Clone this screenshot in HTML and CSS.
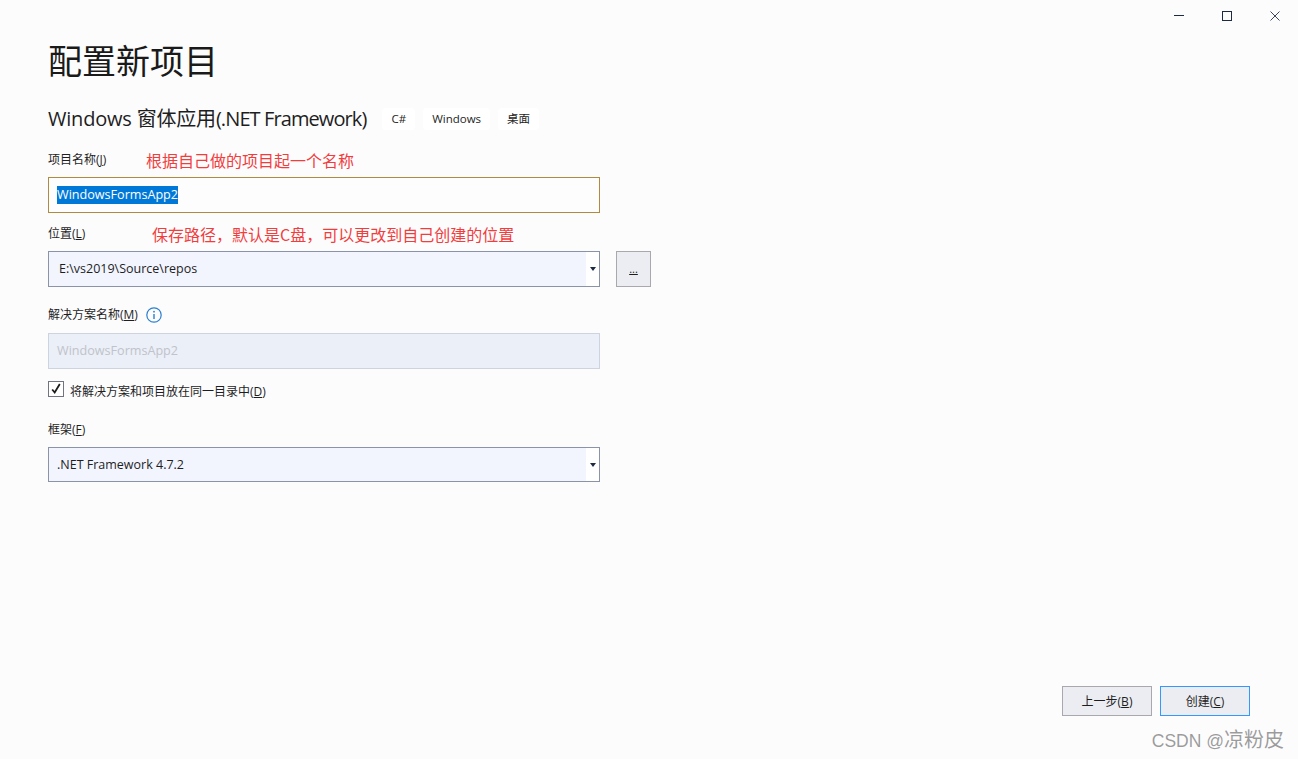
FILE: index.html
```html
<!DOCTYPE html>
<html lang="zh-CN">
<head>
<meta charset="utf-8">
<title>配置新项目</title>
<link rel="stylesheet" href="styles.css">
</head>
<body>
<div class="window">
  <header class="titlebar">
    <button class="winbtn" aria-label="最小化"><svg width="12" height="12" viewBox="0 0 12 12"><path d="M1 5.5h10" stroke="#1e2a44" stroke-width="1"/></svg></button>
    <button class="winbtn" aria-label="最大化"><svg width="12" height="12" viewBox="0 0 12 12"><rect x="1.5" y="1.5" width="9" height="9" fill="none" stroke="#1e2a44" stroke-width="1"/></svg></button>
    <button class="winbtn" aria-label="关闭"><svg width="12" height="12" viewBox="0 0 12 12"><path d="M1.5 1.5l9 9M10.5 1.5l-9 9" stroke="#3c465e" stroke-width="1"/></svg></button>
  </header>
  <main class="content">
    <h1 class="title">配置新项目</h1>
    <div class="subtitle-row">
      <h2 class="subtitle">Windows 窗体应用<span class="tight">(.NET Framework)</span></h2>
      <div class="chips">
        <span class="chip">C#</span>
        <span class="chip">Windows</span>
        <span class="chip">桌面</span>
      </div>
    </div>

    <div class="label-row label-first">
      <label class="label label-w1">项目名称(<u>J</u>)</label>
      <span class="note">根据自己做的项目起一个名称</span>
    </div>
    <div class="field field-active"><span class="selected">WindowsFormsApp2</span></div>

    <div class="label-row label-second">
      <label class="label label-w2">位置(<u>L</u>)</label>
      <span class="note">保存路径，默认是C盘，可以更改到自己创建的位置</span>
    </div>
    <div class="combo-line">
      <div class="field combo">
        <span class="combo-text combo-text-path">E:\vs2019\Source\repos</span>
        <span class="combo-arrow"><svg width="6" height="4" viewBox="0 0 6 4"><path d="M0 0h6L3 4z" fill="#1e2a44"/></svg></span>
      </div>
      <button class="browse"><u>...</u></button>
    </div>

    <div class="label-row label-third">
      <label class="label">解决方案名称(<u>M</u>)</label>
      <svg class="info" width="16" height="16" viewBox="0 0 16 16"><circle cx="8" cy="8" r="7.2" fill="none" stroke="#2a7fd0" stroke-width="1.2"/><path d="M8 7v5" stroke="#2a7fd0" stroke-width="1.4"/><circle cx="8" cy="4.7" r="0.9" fill="#2a7fd0"/></svg>
    </div>
    <div class="field field-disabled">WindowsFormsApp2</div>

    <div class="check-row">
      <span class="checkbox"><svg width="12" height="12" viewBox="0 0 12 12"><path d="M2.2 6.5l2.5 3L9.8 1" fill="none" stroke="#1b1b1b" stroke-width="1.8"/></svg></span>
      <span class="label check-label">将解决方案和项目放在同一目录中(<u>D</u>)</span>
    </div>

    <div class="label-row label-fourth">
      <label class="label">框架(<u>F</u>)</label>
    </div>
    <div class="field combo combo-short">
      <span class="combo-text">.NET Framework 4.7.2</span>
      <span class="combo-arrow"><svg width="6" height="4" viewBox="0 0 6 4"><path d="M0 0h6L3 4z" fill="#1e2a44"/></svg></span>
    </div>
  </main>
  <footer class="footer">
    <button class="btn">上一步(<u>B</u>)</button>
    <button class="btn btn-default">创建(<u>C</u>)</button>
  </footer>
  <div class="watermark"><span class="watermark-latin">CSDN @</span>凉粉皮</div>
</div>
</body>
</html>
```
FILE: styles.css
```css
* { box-sizing: border-box; }
html, body { margin: 0; padding: 0; }
body {
  width: 1298px;
  height: 759px;
  overflow: hidden;
  background: #fcfcfd;
  color: #1e1e1e;
  font-family: "Open Sans", "Noto Sans CJK SC", sans-serif;
  font-size: 12px;
}
button { font-family: inherit; padding: 0; }
u { text-underline-offset: 1px; }
.window {
  position: relative;
  width: 1298px;
  height: 759px;
  display: flex;
  flex-direction: column;
}
.titlebar {
  display: flex;
  justify-content: flex-end;
  height: 32px;
}
.winbtn {
  width: 48px;
  height: 32px;
  padding-left: 2px;
  border: 0;
  background: transparent;
  display: flex;
  align-items: center;
  justify-content: center;
}
.content {
  flex: 1;
  display: flex;
  flex-direction: column;
  align-items: flex-start;
  padding-left: 48px;
}
.title {
  margin: 6px 0 0;
  height: 44px;
  line-height: 44px;
  font-size: 34px;
  font-weight: 400;
  color: #1a1a1a;
  font-family: "Noto Sans CJK SC", sans-serif;
}
.subtitle-row {
  display: flex;
  align-items: center;
  margin-top: 22px;
  height: 30px;
}
.subtitle {
  margin: 0;
  font-size: 20px;
  font-weight: 400;
  line-height: 30px;
  letter-spacing: -0.2px;
}
.tight { letter-spacing: -0.9px; }
.chips { display: flex; gap: 8px; margin-left: 16px; margin-top: -1px; }
.chip {
  height: 22px;
  line-height: 22px;
  padding: 0 9px;
  background: #fff;
  border-radius: 4px;
  font-size: 11.5px;
}
.label-row {
  display: flex;
  align-items: center;
  height: 18px;
  margin-bottom: 8px;
}
.label-first { margin-top: 17px; }
.label-second { margin-top: 12px; }
.label-third { margin-top: 19px; margin-bottom: 9px; }
.label-fourth { margin-top: 24px; margin-bottom: 8px; }
.label {
  font-size: 12px;
  line-height: 18px;
  color: #1e1e1e;
  white-space: nowrap;
}
.label-w1 { width: 98px; }
.label-w2 { width: 104px; }
.check-label { margin-top: 6px; }
.note {
  font-size: 16px;
  line-height: 22px;
  color: #f23d3d;
  font-family: "Noto Sans CJK SC", sans-serif;
  white-space: nowrap;
}
.info { margin-left: 8px; }
.field {
  width: 552px;
  height: 36px;
  line-height: 34px;
  padding-left: 8px;
  font-size: 12.6px;
  border: 1px solid #8a93a8;
}
.field-active { border-color: #b08a3e; background: #fdfdfe; }
.selected {
  display: inline-block;
  height: 18px;
  line-height: 18px;
  background: #0078d7;
  color: #fff;
}
.combo {
  display: flex;
  padding-left: 0;
  background: #fff;
}
.combo-text {
  flex: 1;
  background: #f2f5fe;
  padding-left: 8px;
  font-size: 12.5px;
}
.combo-text-path { padding-left: 10px; font-size: 12.5px; }
.combo-arrow {
  width: 13px;
  display: flex;
  align-items: center;
  justify-content: center;
}
.combo-short { height: 35px; line-height: 33px; }
.combo-line { display: flex; gap: 16px; }
.browse {
  width: 35px;
  height: 36px;
  background: #ecedf2;
  border: 1px solid #a9a9ad;
  color: #1e1e1e;
  font-size: 11px;
  line-height: 34px;
}
.field-disabled {
  background: #ebeff7;
  border-color: #cdd3df;
  color: #bfc3cb;
}
.check-row {
  display: flex;
  align-items: center;
  gap: 6px;
  margin-top: 12px;
  height: 16px;
}
.checkbox {
  width: 16px;
  height: 16px;
  border: 1px solid #6f7480;
  background: #fff;
  display: flex;
  align-items: center;
  justify-content: center;
}
.footer {
  display: flex;
  justify-content: flex-end;
  gap: 8px;
  padding-right: 48px;
  height: 73px;
}
.btn {
  width: 90px;
  height: 30px;
  background: #ecedf2;
  border: 1px solid #a9a9ad;
  color: #1e1e1e;
  font-size: 12px;
}
.btn-default { border-color: #3399ff; }
.watermark {
  position: absolute;
  right: 14px;
  top: 728px;
  font-family: "Liberation Sans", "Noto Sans CJK SC", sans-serif;
  font-size: 20px;
  line-height: 24px;
  color: rgba(90, 90, 90, 0.6);
  white-space: nowrap;
}
.watermark-latin { font-size: 17.5px; }
```
